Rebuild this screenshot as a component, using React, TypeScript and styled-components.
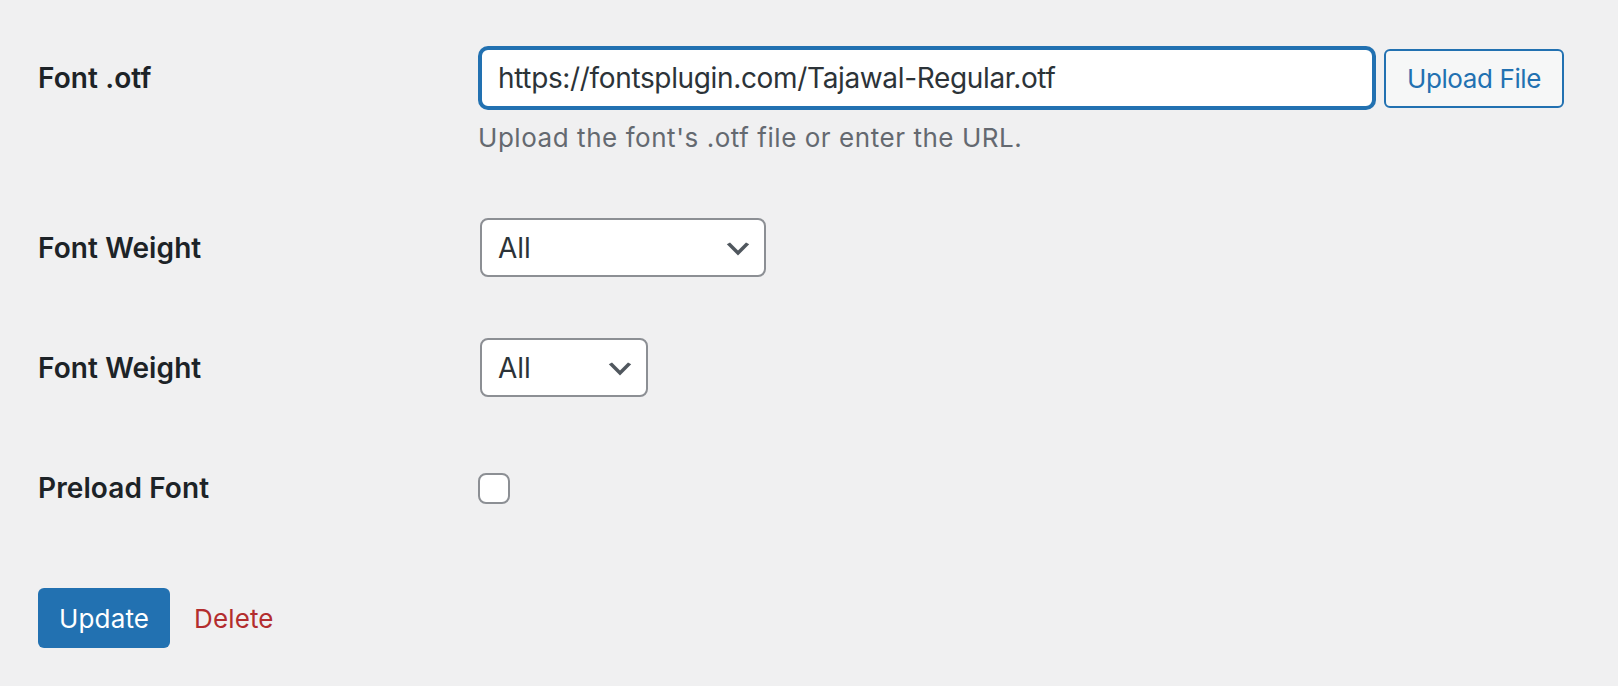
import React from "react";
import styled, { createGlobalStyle } from "styled-components";

const GlobalStyle = createGlobalStyle`
  html, body {
    margin: 0;
    padding: 0;
    background: #f0f0f1;
  }
  body {
    font-family: Inter, "Noto Sans", "Liberation Sans", sans-serif;
    color: #1d2327;
    -webkit-font-smoothing: antialiased;
  }
  * { box-sizing: border-box; }
`;

const Page = styled.div`
  min-height: 100vh;
  background: #f0f0f1;
  padding: 48px 0 0 38px;
  display: flex;
  flex-direction: column;
`;

const Table = styled.div`
  display: flex;
  flex-direction: column;
  gap: 60px;
`;

const Row = styled.div`
  display: grid;
  grid-template-columns: 440px 1fr;
  align-items: start;
`;

const Label = styled.div`
  font-size: 28px;
  font-weight: 600;
  line-height: 60px;
  height: 60px;
  color: #1d2327;
  letter-spacing: 0.1px;
`;

const Field = styled.div`
  display: flex;
  flex-direction: column;
`;

const InputLine = styled.div`
  display: flex;
  align-items: center;
  gap: 10px;
`;

const TextInput = styled.div`
  width: 894px;
  height: 60px;
  margin-left: 2px;
  border: 2px solid #2271b1;
  box-shadow: 0 0 0 2px #2271b1;
  border-radius: 8px;
  background: #fff;
  padding: 0 16px;
  display: flex;
  align-items: center;
  font-size: 28px;
  color: #2c3338;
  letter-spacing: -0.35px;
`;

const SecondaryButton = styled.div`
  height: 59px;
  padding: 0 21px;
  border: 2px solid #2271b1;
  border-radius: 6px;
  background: #f6f7f7;
  color: #2271b1;
  font-size: 26px;
  display: flex;
  align-items: center;
  letter-spacing: -0.4px;
`;

const Help = styled.p`
  margin: 10px 0 0;
  font-size: 26px;
  line-height: 40px;
  color: #646970;
  letter-spacing: 0.55px;
`;

const SelectBox = styled.div<{ $w: number }>`
  width: ${(p) => p.$w}px;
  height: 59px;
  margin-left: 2px;
  border: 2px solid #8c8f94;
  border-radius: 8px;
  background: #fff;
  display: flex;
  align-items: center;
  justify-content: space-between;
  padding: 0 10px 0 16px;
  font-size: 28px;
  color: #2c3338;
`;

const Chevron = styled.svg`
  width: 32px;
  height: 32px;
  margin-top: 2px;
  flex: none;
`;

const CheckCell = styled.div`
  height: 60px;
  display: flex;
  align-items: center;
`;

const Checkbox = styled.div`
  width: 32px;
  height: 31px;
  border: 2px solid #8c8f94;
  border-radius: 8px;
  background: #fff;
`;

const Actions = styled.div`
  display: flex;
  align-items: center;
  gap: 24px;
  margin-top: 70px;
`;

const PrimaryButton = styled.div`
  height: 60px;
  padding: 0 21px;
  background: #2271b1;
  border-radius: 6px;
  color: #fff;
  font-size: 26px;
  display: flex;
  align-items: center;
  letter-spacing: 0.15px;
`;

const DeleteLink = styled.span`
  color: #b32d2e;
  font-size: 26px;
  letter-spacing: 0.1px;
`;

const Select = ({ w, value }: { w: number; value: string }) => (
  <SelectBox $w={w}>
    <span>{value}</span>
    <Chevron viewBox="0 0 20 20">
      <path d="M5 6l5 5 5-5 2 1-7 7-7-7 2-1z" fill="#50575e" />
    </Chevron>
  </SelectBox>
);

export default function App() {
  return (
    <>
      <GlobalStyle />
      <Page>
        <Table>
          <Row>
            <Label>Font .otf</Label>
            <Field>
              <InputLine>
                <TextInput>https://fontsplugin.com/Tajawal-Regular.otf</TextInput>
                <SecondaryButton>Upload File</SecondaryButton>
              </InputLine>
              <Help>Upload the font's .otf file or enter the URL.</Help>
            </Field>
          </Row>
          <Row>
            <Label>Font Weight</Label>
            <Field>
              <Select w={286} value="All" />
            </Field>
          </Row>
          <Row>
            <Label>Font Weight</Label>
            <Field>
              <Select w={168} value="All" />
            </Field>
          </Row>
          <Row>
            <Label>Preload Font</Label>
            <CheckCell>
              <Checkbox />
            </CheckCell>
          </Row>
        </Table>
        <Actions>
          <PrimaryButton>Update</PrimaryButton>
          <DeleteLink>Delete</DeleteLink>
        </Actions>
      </Page>
    </>
  );
}
